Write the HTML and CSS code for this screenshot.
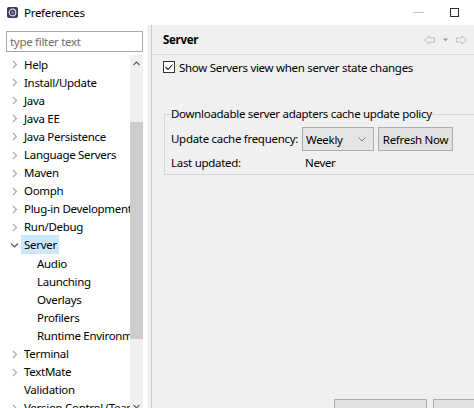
FILE: index.html
```html
<!DOCTYPE html>
<html>
<head>
<meta charset="utf-8">
<title>Preferences</title>
<link rel="stylesheet" href="styles.css">
</head>
<body>
<div class="window">
  <div class="titlebar">
    <svg class="app-icon" width="11" height="11" viewBox="0 0 11 11">
      <rect x="0" y="0" width="11" height="11" rx="2" fill="#3b3a5a"/>
      <circle cx="5.5" cy="5.5" r="3.3" fill="none" stroke="#d4d4e6" stroke-width="1.3"/>
      <circle cx="5.5" cy="5.5" r="1.2" fill="#8f8fb8"/>
    </svg>
    <span class="title">Preferences</span>
    <span class="win-min"></span>
    <span class="win-max"></span>
  </div>
  <div class="main">
    <div class="left">
      <div class="filter">type filter text</div>
      <div class="tree-wrap">
        <ul class="tree">
          <li class="row"><span class="tw"><svg width="21" height="18" viewBox="0 0 21 18"><polyline points="13,6 16.5,9.5 13,13" class="chev"/></svg></span><span class="label">Help</span></li>
          <li class="row"><span class="tw"><svg width="21" height="18" viewBox="0 0 21 18"><polyline points="13,6 16.5,9.5 13,13" class="chev"/></svg></span><span class="label">Install/Update</span></li>
          <li class="row"><span class="tw"><svg width="21" height="18" viewBox="0 0 21 18"><polyline points="13,6 16.5,9.5 13,13" class="chev"/></svg></span><span class="label">Java</span></li>
          <li class="row"><span class="tw"><svg width="21" height="18" viewBox="0 0 21 18"><polyline points="13,6 16.5,9.5 13,13" class="chev"/></svg></span><span class="label">Java EE</span></li>
          <li class="row"><span class="tw"><svg width="21" height="18" viewBox="0 0 21 18"><polyline points="13,6 16.5,9.5 13,13" class="chev"/></svg></span><span class="label">Java Persistence</span></li>
          <li class="row"><span class="tw"><svg width="21" height="18" viewBox="0 0 21 18"><polyline points="13,6 16.5,9.5 13,13" class="chev"/></svg></span><span class="label">Language Servers</span></li>
          <li class="row"><span class="tw"><svg width="21" height="18" viewBox="0 0 21 18"><polyline points="13,6 16.5,9.5 13,13" class="chev"/></svg></span><span class="label">Maven</span></li>
          <li class="row"><span class="tw"><svg width="21" height="18" viewBox="0 0 21 18"><polyline points="13,6 16.5,9.5 13,13" class="chev"/></svg></span><span class="label">Oomph</span></li>
          <li class="row"><span class="tw"><svg width="21" height="18" viewBox="0 0 21 18"><polyline points="13,6 16.5,9.5 13,13" class="chev"/></svg></span><span class="label">Plug-in Development</span></li>
          <li class="row"><span class="tw"><svg width="21" height="18" viewBox="0 0 21 18"><polyline points="13,6 16.5,9.5 13,13" class="chev"/></svg></span><span class="label">Run/Debug</span></li>
          <li class="row"><span class="tw"><svg width="21" height="18" viewBox="0 0 21 18"><polyline points="11,7.5 14.5,11 18,7.5" class="chev open"/></svg></span><span class="label selected">Server</span></li>
          <li class="row child"><span class="label">Audio</span></li>
          <li class="row child"><span class="label">Launching</span></li>
          <li class="row child"><span class="label">Overlays</span></li>
          <li class="row child"><span class="label">Profilers</span></li>
          <li class="row child"><span class="label">Runtime Environments</span></li>
          <li class="row"><span class="tw"><svg width="21" height="18" viewBox="0 0 21 18"><polyline points="13,6 16.5,9.5 13,13" class="chev"/></svg></span><span class="label">Terminal</span></li>
          <li class="row"><span class="tw"><svg width="21" height="18" viewBox="0 0 21 18"><polyline points="13,6 16.5,9.5 13,13" class="chev"/></svg></span><span class="label">TextMate</span></li>
          <li class="row"><span class="tw"></span><span class="label">Validation</span></li>
          <li class="row"><span class="tw"><svg width="21" height="18" viewBox="0 0 21 18"><polyline points="13,6 16.5,9.5 13,13" class="chev"/></svg></span><span class="label">Version Control (Team)</span></li>
          <li class="row"><span class="tw"><svg width="21" height="18" viewBox="0 0 21 18"><polyline points="13,6 16.5,9.5 13,13" class="chev"/></svg></span><span class="label">XML</span></li>
        </ul>
        <div class="vscroll">
          <div class="sb-arrow"><svg width="13" height="17" viewBox="0 0 13 17"><polyline points="3.5,10 6.5,7 9.5,10" class="sb-chev"/></svg></div>
          <div class="sb-gap1"></div>
          <div class="sb-thumb"></div>
          <div class="sb-gap2"></div>
          <div class="sb-arrow"><svg width="13" height="17" viewBox="0 0 13 17"><polyline points="3.5,7 6.5,10 9.5,7" class="sb-chev"/></svg></div>
        </div>
      </div>
    </div>
    <div class="sash"></div>
    <div class="right">
      <div class="page-header">
        <span class="page-title">Server</span>
        <span class="nav">
          <svg width="11" height="10" viewBox="0 0 11 10"><polygon points="0.5,5 5,0.8 5,3 10.5,3 10.5,7 5,7 5,9.2" class="nav-arrow"/></svg>
          <svg class="nav-drop" width="5" height="4" viewBox="0 0 5 4"><polygon points="0,0.5 5,0.5 2.5,3.5" fill="#9a9a9a"/></svg>
          <svg width="11" height="10" viewBox="0 0 11 10"><polygon points="10.5,5 6,0.8 6,3 0.5,3 0.5,7 6,7 6,9.2" class="nav-arrow"/></svg>
        </span>
      </div>
      <div class="page-body">
        <div class="check-row">
          <svg class="checkbox" width="12" height="12" viewBox="0 0 12 12">
            <rect x="0.5" y="0.5" width="11" height="11" fill="#fff" stroke="#333"/>
            <polyline points="2.5,6 5,8.5 9.5,3.5" fill="none" stroke="#222" stroke-width="1.1"/>
          </svg>
          <span>Show Servers view when server state changes</span>
        </div>
        <fieldset class="group">
          <legend>Downloadable server adapters cache update policy</legend>
          <div class="form-grid">
            <span class="form-label">Update cache frequency:</span>
            <div class="combo">
              <span>Weekly</span>
              <svg width="8" height="5" viewBox="0 0 8 5"><polyline points="0.5,0.5 4,4 7.5,0.5" fill="none" stroke="#7a7a7a" stroke-width="1"/></svg>
            </div>
            <div class="btn">Refresh Now</div>
            <span class="form-label">Last updated:</span>
            <span class="value">Never</span>
            <span></span>
          </div>
        </fieldset>
      </div>
      <div class="footer">
        <div class="btn wide">Restore Defaults</div>
        <div class="btn wide">Apply</div>
      </div>
    </div>
  </div>
</div>
</body>
</html>
```

FILE: styles.css
```css
html, body {
  margin: 0;
  padding: 0;
  background: #ffffff;
  overflow: hidden;
}

body {
  font-family: "Noto Sans", "Liberation Sans", sans-serif;
  font-size: 11.5px;
  letter-spacing: -0.3px;
  color: #000;
}

.window {
  width: 474px;
  height: 440px;
  display: flex;
  flex-direction: column;
}

/* title bar */
.titlebar {
  height: 25px;
  flex: none;
  display: flex;
  align-items: center;
  background: #fff;
}

.app-icon {
  margin-left: 7px;
  margin-top: -1px;
  flex: none;
}

.title {
  margin-left: 6px;
  margin-top: -1px;
}

.win-min {
  margin-left: auto;
  width: 11px;
  height: 1px;
  background: #c4c4c4;
  margin-right: 26px;
  margin-top: -1px;
}

.win-max {
  width: 9px;
  height: 9px;
  box-sizing: border-box;
  border: 1px solid #2b2b2b;
  margin-right: 15px;
  margin-top: -1px;
}

/* main area */
.main {
  flex: 1;
  display: flex;
  min-height: 0;
}

.left {
  width: 147px;
  flex: none;
  display: flex;
  flex-direction: column;
  background: #fff;
}

.filter {
  margin: 6px 4px 0 6px;
  height: 21px;
  box-sizing: border-box;
  border: 1px solid #a9a9a9;
  padding-left: 3px;
  line-height: 19px;
  color: #6d6d6d;
  white-space: nowrap;
  overflow: hidden;
}

.tree-wrap {
  margin-top: 3px;
  display: flex;
  flex: 1;
  min-height: 0;
  padding-right: 4px;
}

.tree {
  width: 130px;
  flex: none;
  list-style: none;
  margin: 0;
  padding: 0;
  overflow: hidden;
}

.row {
  height: 18.1px;
  display: flex;
  align-items: center;
  white-space: nowrap;
}

.row.child {
  padding-left: 34px;
}

.tw {
  width: 21px;
  height: 18px;
  flex: none;
}

.tw svg {
  display: block;
}

.chev {
  fill: none;
  stroke: #a6a6a6;
  stroke-width: 1.1;
}

.chev.open {
  stroke: #555;
}

.label {
  padding: 1px 2px 0 3px;
  line-height: 18px;
}

.label.selected {
  background: #cce8ff;
}

/* scrollbar */
.vscroll {
  width: 13px;
  flex: none;
  background: #f0f0f0;
  display: flex;
  flex-direction: column;
}

.sb-arrow {
  height: 17px;
  flex: none;
}

.sb-arrow svg {
  display: block;
}

.sb-chev {
  fill: none;
  stroke: #606060;
  stroke-width: 1.2;
}

.sb-gap1 {
  height: 50px;
  flex: none;
}

.sb-thumb {
  height: 217px;
  flex: none;
  background: #cdcdcd;
}

.sb-gap2 {
  height: 59px;
  flex: none;
}

/* sash */
.sash {
  width: 4px;
  flex: none;
  background: #f0f0f0;
}

/* right panel */
.right {
  flex: 1;
  min-width: 0;
  display: flex;
  flex-direction: column;
  background: #f0f0f0;
  border-left: 1px solid #cbcbcb;
  overflow: hidden;
}

.page-header {
  height: 29px;
  flex: none;
  border-bottom: 1px solid #d9d9d9;
  display: flex;
  align-items: center;
  padding-left: 11px;
}

.page-title {
  font-weight: bold;
}

.nav {
  margin-left: auto;
  margin-right: 7px;
  display: flex;
  align-items: center;
}

.nav svg {
  display: block;
}

.nav-drop {
  margin: 0 8px 0 8px;
}

.nav-arrow {
  fill: none;
  stroke: #bdbdbd;
  stroke-width: 1;
}

.page-body {
  padding: 5px 0 0 11px;
}

.check-row {
  display: flex;
  align-items: center;
  height: 14px;
  white-space: nowrap;
}

.checkbox {
  flex: none;
  margin-right: 4px;
}

.group {
  margin: 32px -40px 0 1px;
  padding: 0 6px 3px 6px;
  border: 1px solid #d6d6d6;
}

.group legend {
  padding: 0;
  line-height: 16px;
  white-space: nowrap;
}

.form-grid {
  margin-top: 5px;
  display: grid;
  grid-template-columns: 127px 72px 75px;
  column-gap: 4px;
  row-gap: 4px;
  align-items: center;
  white-space: nowrap;
}

.form-grid > span {
  line-height: 16px;
}

.combo {
  height: 24px;
  box-sizing: border-box;
  border: 1px solid #adadad;
  background: #e5e5e5;
  display: flex;
  align-items: center;
  justify-content: space-between;
  padding: 0 7px 0 3px;
}

.combo svg {
  display: block;
}

.value {
  padding-left: 3px;
}

.btn {
  height: 24px;
  box-sizing: border-box;
  border: 1px solid #adadad;
  background: #e1e1e1;
  display: flex;
  align-items: center;
  justify-content: center;
  white-space: nowrap;
}

.footer {
  margin-top: auto;
  flex: none;
  display: flex;
  gap: 6px;
  padding: 0 0 16px 182px;
}

.btn.wide {
  width: 93px;
  height: 25px;
  flex: none;
  align-items: flex-start;
  padding-top: 8px;
}
```
